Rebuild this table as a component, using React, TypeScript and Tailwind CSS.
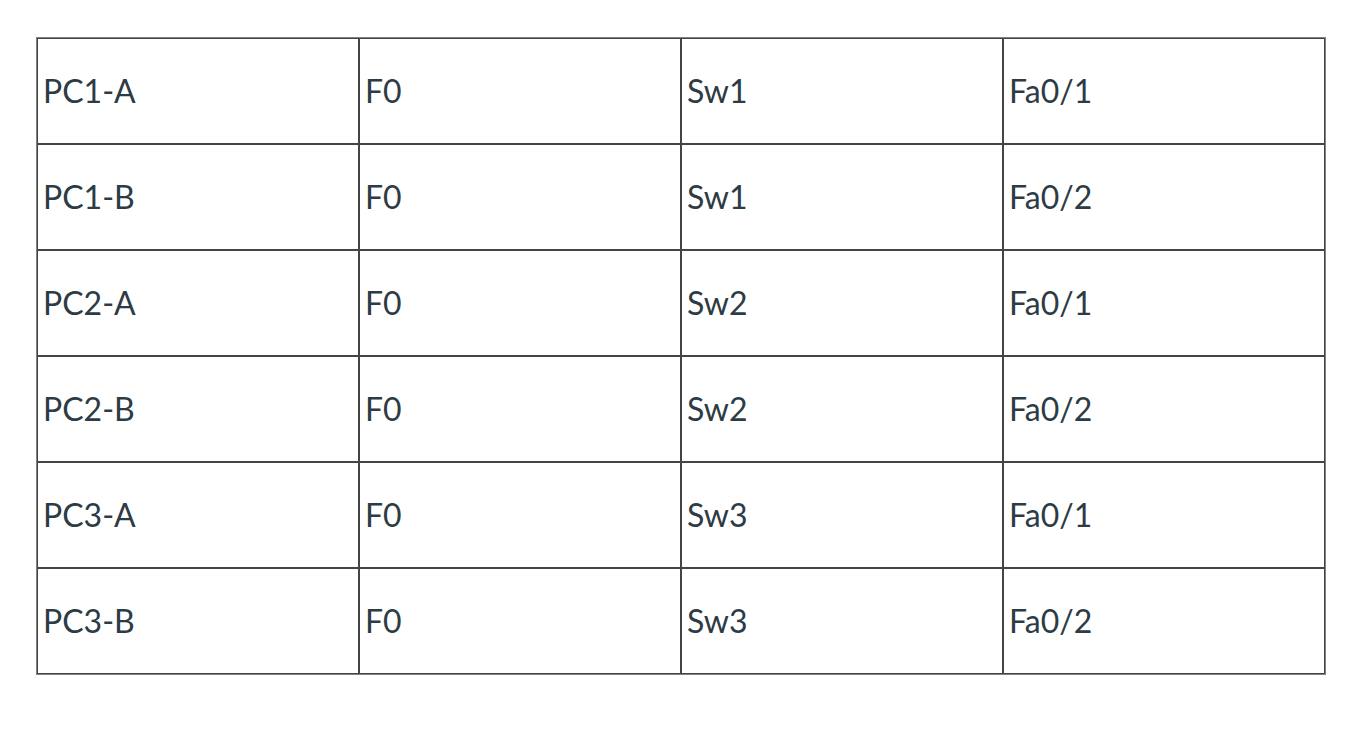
import React from "react";

const rows = [
  ["PC1-A", "F0", "Sw1", "Fa0/1"],
  ["PC1-B", "F0", "Sw1", "Fa0/2"],
  ["PC2-A", "F0", "Sw2", "Fa0/1"],
  ["PC2-B", "F0", "Sw2", "Fa0/2"],
  ["PC3-A", "F0", "Sw3", "Fa0/1"],
  ["PC3-B", "F0", "Sw3", "Fa0/2"],
];

export default function App() {
  return (
    <div className="min-h-[746px] bg-white pl-[36px] pt-[37px]" style={{ fontFamily: "Lato, 'Open Sans', sans-serif" }}>
      <table className="w-[1290px] table-fixed border-separate border-spacing-0 border border-[#808080] text-[32px] text-[#2d3b45]">
        <tbody>
          {rows.map((r, i) => (
            <tr key={i}>
              {r.map((c, j) => (
                <td key={j} className="h-[106px] border border-[#444444] pl-[5px] align-middle leading-none">
                  {c}
                </td>
              ))}
            </tr>
          ))}
        </tbody>
      </table>
    </div>
  );
}
